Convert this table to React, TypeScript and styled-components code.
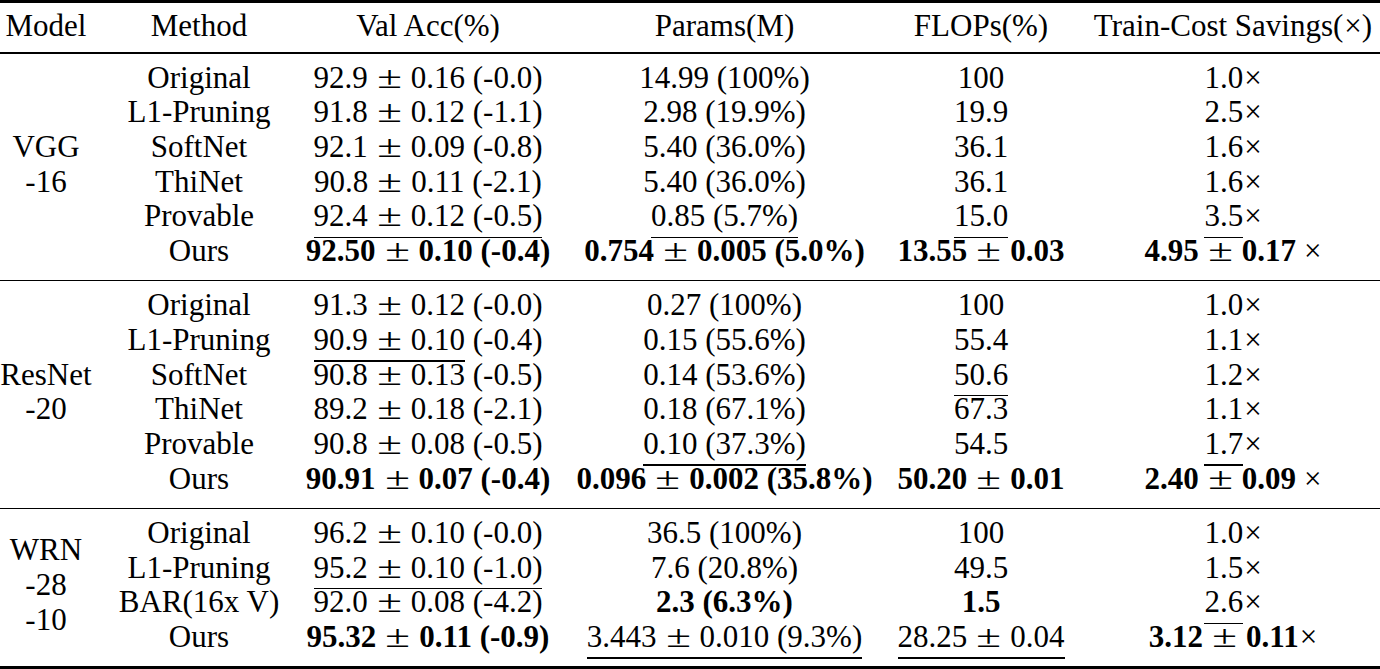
import React from "react";
import styled, { createGlobalStyle } from "styled-components";

const GlobalStyle = createGlobalStyle`
  html, body { margin: 0; padding: 0; background: #fff; }
  body {
    font-family: "Liberation Serif", "Times New Roman", serif;
    color: #000;
    overflow: hidden;
  }
`;

const LINE = 34.7;
const COLS = "106px 186px 272px 321px 192px 303px";

const Table = styled.div`
  width: 1380px;
  display: flex;
  flex-direction: column;
  font-size: 31px;
  line-height: ${LINE}px;
`;

const Rule = styled.div<{ $w: number }>`
  height: ${(p) => p.$w}px;
  width: 100%;
  background: #000;
`;

const Grid = styled.div<{ $pt: number; $pb: number }>`
  display: grid;
  grid-template-columns: ${COLS};
  grid-auto-rows: ${LINE}px;
  padding: ${(p) => p.$pt}px 0 ${(p) => p.$pb}px;
`;

const Cell = styled.div<{ $col: number }>`
  display: flex;
  justify-content: center;
  white-space: nowrap;
  min-width: 0;
  padding-left: ${(p) => (p.$col === 5 ? 9 : 0)}px;
  padding-right: ${(p) => (p.$col === 0 ? 14 : 0)}px;
`;

const ModelCell = styled.div<{ $rows: number }>`
  grid-column: 1;
  grid-row: 1 / span ${(p) => p.$rows};
  display: flex;
  flex-direction: column;
  align-items: center;
  justify-content: center;
  padding-right: 14px;
  white-space: nowrap;
`;

const B = styled.span`
  font-weight: 700;
`;

const U = styled.span`
  position: relative;
  &::after {
    content: "";
    position: absolute;
    left: 0;
    right: 0;
    bottom: -3.9px;
    height: 1.3px;
    background: #000;
  }
`;

const PmGlyph = styled.span`
  display: inline-block;
  width: 25px;
  margin: 0 9px;
  text-align: center;
  font-weight: 400;
  transform: scaleX(1.45);
`;

const TimesGlyph = styled.span<{ $gap?: boolean }>`
  font-weight: 400;
  margin-left: ${(p) => (p.$gap ? 8 : 1)}px;
`;

const Pm = () => <PmGlyph>±</PmGlyph>;
const X = ({ gap }: { gap?: boolean }) => <TimesGlyph $gap={gap}>×</TimesGlyph>;

type Row = React.ReactNode[];

const pm = (a: string, b: string, c?: string) => (
  <>
    {a}
    <Pm />
    {b}
    {c !== undefined ? ` ${c}` : null}
  </>
);

const sections: { model: string[]; rows: Row[] }[] = [
  {
    model: ["VGG", "-16"],
    rows: [
      ["Original", pm("92.9", "0.16", "(-0.0)"), "14.99 (100%)", "100", <>1.0<X /></>],
      ["L1-Pruning", pm("91.8", "0.12", "(-1.1)"), "2.98 (19.9%)", "19.9", <>2.5<X /></>],
      ["SoftNet", pm("92.1", "0.09", "(-0.8)"), "5.40 (36.0%)", "36.1", <>1.6<X /></>],
      ["ThiNet", pm("90.8", "0.11", "(-2.1)"), "5.40 (36.0%)", "36.1", <>1.6<X /></>],
      [
        "Provable",
        <U>{pm("92.4", "0.12", "(-0.5)")}</U>,
        <U>0.85 (5.7%)</U>,
        <U>15.0</U>,
        <><U>3.5</U><X /></>,
      ],
      [
        "Ours",
        <B>{pm("92.50", "0.10", "(-0.4)")}</B>,
        <B>{pm("0.754", "0.005", "(5.0%)")}</B>,
        <B>{pm("13.55", "0.03")}</B>,
        <><B>{pm("4.95", "0.17")}</B><X gap /></>,
      ],
    ],
  },
  {
    model: ["ResNet", "-20"],
    rows: [
      ["Original", pm("91.3", "0.12", "(-0.0)"), "0.27 (100%)", "100", <>1.0<X /></>],
      [
        "L1-Pruning",
        <><U>{pm("90.9", "0.10")}</U>&nbsp;(-0.4)</>,
        "0.15 (55.6%)",
        "55.4",
        <>1.1<X /></>,
      ],
      ["SoftNet", pm("90.8", "0.13", "(-0.5)"), "0.14 (53.6%)", <U>50.6</U>, <>1.2<X /></>],
      ["ThiNet", pm("89.2", "0.18", "(-2.1)"), "0.18 (67.1%)", "67.3", <>1.1<X /></>],
      ["Provable", pm("90.8", "0.08", "(-0.5)"), <U>0.10 (37.3%)</U>, "54.5", <><U>1.7</U><X /></>],
      [
        "Ours",
        <B>{pm("90.91", "0.07", "(-0.4)")}</B>,
        <B>{pm("0.096", "0.002", "(35.8%)")}</B>,
        <B>{pm("50.20", "0.01")}</B>,
        <><B>{pm("2.40", "0.09")}</B><X gap /></>,
      ],
    ],
  },
  {
    model: ["WRN", "-28", "-10"],
    rows: [
      ["Original", pm("96.2", "0.10", "(-0.0)"), "36.5 (100%)", "100", <>1.0<X /></>],
      ["L1-Pruning", <U>{pm("95.2", "0.10", "(-1.0)")}</U>, "7.6 (20.8%)", "49.5", <>1.5<X /></>],
      ["BAR(16x V)", pm("92.0", "0.08", "(-4.2)"), <B>2.3 (6.3%)</B>, <B>1.5</B>, <><U>2.6</U><X /></>],
      [
        "Ours",
        <B>{pm("95.32", "0.11", "(-0.9)")}</B>,
        <U>{pm("3.443", "0.010", "(9.3%)")}</U>,
        <U>{pm("28.25", "0.04")}</U>,
        <><B>{pm("3.12", "0.11")}</B><X /></>,
      ],
    ],
  },
];

const headers: React.ReactNode[] = [
  "Model",
  "Method",
  "Val Acc(%)",
  "Params(M)",
  "FLOPs(%)",
  <>Train-Cost Savings(<X />)</>,
];

export default function App() {
  return (
    <>
      <GlobalStyle />
      <Table>
        <Rule $w={3.2} />
        <Grid $pt={6.2} $pb={8}>
          {headers.map((h, i) => (
            <Cell key={i} $col={i}>
              {h}
            </Cell>
          ))}
        </Grid>
        <Rule $w={1.6} />
        {sections.map((s, si) => (
          <React.Fragment key={si}>
            <Grid $pt={7} $pb={11}>
              <ModelCell $rows={s.rows.length}>
                {s.model.map((m) => (
                  <div key={m}>{m}</div>
                ))}
              </ModelCell>
              {s.rows.flatMap((r, ri) =>
                r.map((c, ci) => (
                  <Cell key={`${ri}-${ci}`} $col={ci + 1}>
                    {c}
                  </Cell>
                ))
              )}
            </Grid>
            <Rule $w={si === sections.length - 1 ? 3.4 : 1.6} />
          </React.Fragment>
        ))}
      </Table>
    </>
  );
}
